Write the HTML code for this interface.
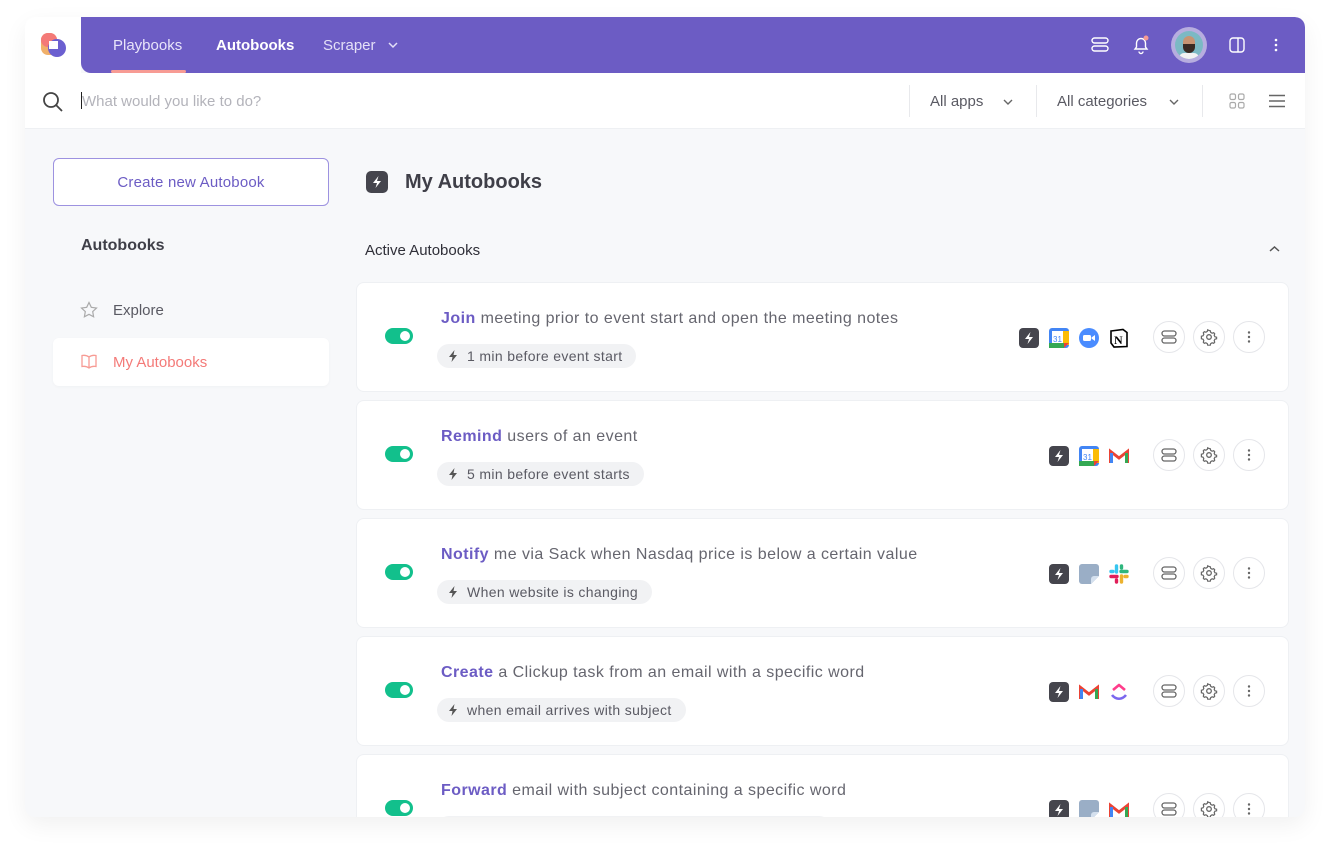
<!DOCTYPE html>
<html><head><meta charset="utf-8"><style>
*{box-sizing:border-box;margin:0;padding:0}
body{width:1330px;height:850px;background:#fff;font-family:"Liberation Sans",sans-serif;position:relative;overflow:hidden;color:#4a4a55}
.abs{position:absolute}
#frame{left:25px;top:17px;width:1280px;height:800px;background:#f7f8fa;border-radius:10px;box-shadow:0 8px 24px rgba(0,0,0,0.06);overflow:hidden}
#hdr{left:56px;top:0;width:1224px;height:56px;background:#6c5cc4;border-radius:0 10px 0 10px}
#logo{left:0;top:0;width:56px;height:56px;background:#fff}
.nav{top:20px;font-size:15px;color:#e4e0f7}
#search{left:0;top:56px;width:1280px;height:56px;background:#fff;border-bottom:1px solid #eef0f3}
.card{left:331px;width:933px;height:110px;background:#fff;border:1px solid #eef0f3;border-radius:8px}
.tog{left:28px;top:45px;width:28px;height:16px;background:#12c08c;border-radius:8px}
.tog:after{content:"";position:absolute;right:3px;top:3px;width:10px;height:10px;border-radius:50%;background:#fff}
.title{left:84px;top:27px;font-size:16px;letter-spacing:0.45px;color:#66666f;white-space:nowrap}
.title b{color:#6c5cc4;font-weight:bold}
.tag{left:80px;top:61px;height:24px;border-radius:12px;background:#f1f2f4;font-size:14px;letter-spacing:0.35px;color:#5a5a63;padding:4px 14px 0 30px;white-space:nowrap}
.tag svg{position:absolute;left:11px;top:6px}
.ic{top:45px;width:20px;height:20px}
.bt{top:38px;width:32px;height:32px;border:1px solid #e5e6ea;border-radius:50%;background:#fff}
.bt svg{position:absolute;left:6px;top:6px}
.zap{background:#45454d;border-radius:4px}
</style></head><body>
<div id="frame" class="abs">
 <div id="logo" class="abs"><svg class="abs" style="left:15px;top:15px" width="26" height="26" viewBox="0 0 26 26"><rect x="1" y="1" width="16" height="22" rx="7" fill="#f0b06a"/><rect x="1" y="1" width="16" height="14" rx="7" fill="#f47a78"/><circle cx="17" cy="16" r="9" fill="#6b5fd0"/><rect x="9" y="9" width="9" height="8" fill="#fff"/></svg></div>
 <div id="hdr" class="abs">
  <div class="abs nav" style="left:32px;color:#e8e4fa">Playbooks</div>
  <div class="abs" style="left:30px;top:53px;width:75px;height:3px;background:#f79b94;border-radius:2px"></div>
  <div class="abs nav" style="left:135px;color:#fff;font-weight:bold">Autobooks</div>
  <div class="abs nav" style="left:242px">Scraper</div>
  <svg class="abs" style="left:307px;top:24px" width="10" height="8"><path d="M1 2l4 4 4-4" fill="none" stroke="#e4e0f7" stroke-width="1.5"/></svg>
  <svg class="abs" style="left:1010px;top:20px" width="18" height="16"><rect x="1" y="1" width="16" height="5" rx="2.5" fill="none" stroke="#fff" stroke-width="1.4"/><rect x="1" y="9" width="16" height="5" rx="2.5" fill="none" stroke="#fff" stroke-width="1.4"/></svg>
  <svg class="abs" style="left:1050px;top:18px" width="20" height="20"><path d="M4 14h12l-1.5-2V8a4.5 4.5 0 0 0-9 0v4z M8 16.5a2 2 0 0 0 4 0" fill="none" stroke="#fff" stroke-width="1.4"/><circle cx="15" cy="3" r="2.5" fill="#f79b94"/></svg>
  <div class="abs" style="left:1090px;top:10px;width:36px;height:36px;border-radius:50%;background:#b7addf"></div>
  <div class="abs" style="left:1094px;top:14px;width:28px;height:28px;border-radius:50%;background:#7cb9c4;overflow:hidden"><div class="abs" style="left:8px;top:5px;width:12px;height:16px;border-radius:6px;background:#c89472"></div><div class="abs" style="left:8px;top:13px;width:12px;height:9px;border-radius:0 0 6px 6px;background:#3a2a22"></div><div class="abs" style="left:4px;top:22px;width:20px;height:10px;border-radius:8px;background:#f2f2f2"></div></div>
  <svg class="abs" style="left:1148px;top:20px" width="16" height="16"><rect x="1" y="1" width="14" height="14" rx="3" fill="none" stroke="#fff" stroke-width="1.4"/><path d="M9 1v14" stroke="#fff" stroke-width="1.4"/></svg>
  <svg class="abs" style="left:1193px;top:20px" width="4" height="16"><circle cx="2" cy="3" r="1.3" fill="#fff"/><circle cx="2" cy="8" r="1.3" fill="#fff"/><circle cx="2" cy="13" r="1.3" fill="#fff"/></svg>
 </div>
 <div id="search" class="abs">
  <svg class="abs" style="left:17px;top:18px" width="22" height="22"><circle cx="9" cy="9" r="7" fill="none" stroke="#444" stroke-width="1.8"/><path d="M14 14l6 6" stroke="#444" stroke-width="1.8"/></svg>
  <div class="abs" style="left:56px;top:19px;width:1px;height:17px;background:#222"></div>
  <div class="abs" style="left:57px;top:20px;font-size:15px;color:#b3b3ba">What would you like to do?</div>
  <div class="abs" style="left:884px;top:12px;width:1px;height:32px;background:#e8e9ec"></div>
  <div class="abs" style="left:905px;top:20px;font-size:15px;color:#5a5a63">All apps</div>
  <svg class="abs" style="left:978px;top:25px" width="10" height="8"><path d="M1 2l4 4 4-4" fill="none" stroke="#666" stroke-width="1.4"/></svg>
  <div class="abs" style="left:1011px;top:12px;width:1px;height:32px;background:#e8e9ec"></div>
  <div class="abs" style="left:1032px;top:20px;font-size:15px;color:#5a5a63">All categories</div>
  <svg class="abs" style="left:1144px;top:25px" width="10" height="8"><path d="M1 2l4 4 4-4" fill="none" stroke="#666" stroke-width="1.4"/></svg>
  <div class="abs" style="left:1177px;top:12px;width:1px;height:32px;background:#e8e9ec"></div>
  <svg class="abs" style="left:1204px;top:20px" width="16" height="16"><g fill="none" stroke="#aaa" stroke-width="1.2"><rect x="1" y="1" width="5.5" height="5.5" rx="1.5"/><rect x="9.5" y="1" width="5.5" height="5.5" rx="1.5"/><rect x="1" y="9.5" width="5.5" height="5.5" rx="1.5"/><rect x="9.5" y="9.5" width="5.5" height="5.5" rx="1.5"/></g></svg>
  <svg class="abs" style="left:1244px;top:21px" width="16" height="14"><path d="M0 1.5h16M0 7h16M0 12.5h16" stroke="#666" stroke-width="1.6"/></svg>
 </div>
 <div class="abs" style="left:28px;top:141px;width:276px;height:48px;border:1px solid #9d92e0;border-radius:6px;background:#fff;text-align:center;font-size:15px;letter-spacing:0.2px;color:#6c5cc4;padding-top:15px">Create new Autobook</div>
 <div class="abs" style="left:56px;top:220px;font-size:16px;font-weight:bold;color:#3f3f48">Autobooks</div>
 <svg class="abs" style="left:55px;top:284px" width="18" height="18"><path d="M9 1.5l2.3 4.8 5.2.7-3.8 3.6.9 5.2L9 13.3l-4.6 2.5.9-5.2L1.5 7l5.2-.7z" fill="none" stroke="#aaa" stroke-width="1.2"/></svg>
 <div class="abs" style="left:88px;top:285px;font-size:15px;color:#5a5a63">Explore</div>
 <div class="abs" style="left:28px;top:321px;width:276px;height:48px;background:#fff;border-radius:6px;box-shadow:0 1px 3px rgba(0,0,0,0.03)"></div>
 <svg class="abs" style="left:55px;top:336px" width="18" height="18"><path d="M9 4c-2-1.5-4.5-2-7-1.5v11c2.5-.5 5 0 7 1.5 2-1.5 4.5-2 7-1.5v-11c-2.5-.5-5 0-7 1.5zM9 4v11" fill="none" stroke="#f79b94" stroke-width="1.3"/></svg>
 <div class="abs" style="left:88px;top:337px;font-size:15px;color:#f47a78">My Autobooks</div>
 <div class="abs zap" style="left:341px;top:154px;width:22px;height:22px;border-radius:5px"><svg class="abs" style="left:5px;top:4px" width="12" height="14"><path d="M7.5 1L2 8h4l-1.5 5L10 6H6z" fill="#fff"/></svg></div>
 <div class="abs" style="left:380px;top:154px;font-size:20px;font-weight:bold;color:#3f3f48">My Autobooks</div>
 <div class="abs" style="left:340px;top:225px;font-size:15px;color:#2f2f38">Active Autobooks</div>
 <svg class="abs" style="left:1244px;top:228px" width="11" height="8"><path d="M1 6l4.5-4 4.5 4" fill="none" stroke="#555" stroke-width="1.5"/></svg>

 <div class="abs card" style="top:265px"><div class="abs tog"></div><div class="abs title"><b>Join</b> meeting prior to event start and open the meeting notes</div><div class="abs tag"><svg width="10" height="12"><path d="M6.5 0L1 7h3.5L3.5 12 9 5H5.5z" fill="#555"/></svg>1 min before event start</div>
  <div class="abs ic zap" style="left:662px"><svg class="abs" style="left:4px;top:3px" width="12" height="14"><path d="M7.5 1L2 8h4l-1.5 5L10 6H6z" fill="#fff"/></svg></div>
  <div class="abs ic" style="left:692px"><svg width="20" height="20"><rect width="20" height="20" rx="3" fill="#4285f4"/><rect x="3" y="3" width="14" height="14" fill="#fff"/><rect x="14" y="3" width="6" height="14" fill="#fbbc04"/><rect x="0" y="15" width="15" height="5" fill="#34a853"/><path d="M15 15h5l-5 5z" fill="#ea4335"/><text x="4" y="14" font-size="8" fill="#4285f4" font-family="Liberation Sans">31</text></svg></div>
  <div class="abs ic" style="left:722px"><svg width="20" height="20"><circle cx="10" cy="10" r="10" fill="#4a8cff"/><rect x="4" y="7" width="8" height="6" rx="1.5" fill="#fff"/><path d="M12.5 9.5l3.5-2.5v6l-3.5-2.5z" fill="#fff"/></svg></div>
  <div class="abs ic" style="left:752px"><svg width="20" height="20"><path d="M2 3l12-1.5 4 3v14l-13 .5-3-4z" fill="#fff" stroke="#000" stroke-width="1.6"/><text x="5" y="16" font-size="12" font-weight="bold" font-family="Liberation Serif">N</text></svg></div>
  <div class="abs bt" style="left:796px"><svg width="18" height="18"><rect x="2" y="3" width="14" height="5" rx="2.5" fill="none" stroke="#666" stroke-width="1.3"/><rect x="2" y="10" width="14" height="5" rx="2.5" fill="none" stroke="#666" stroke-width="1.3"/></svg></div>
  <div class="abs bt" style="left:836px"><svg width="18" height="18"><circle cx="9" cy="9" r="2.3" fill="none" stroke="#666" stroke-width="1.3"/><path d="M9 2.5l1.3.3.4 1.6 1.4.8 1.6-.5 1 1.1-.5 1.6.8 1.4 1.6.4v1.6l-1.6.4-.8 1.4.5 1.6-1 1.1-1.6-.5-1.4.8-.4 1.6H7.7l-.4-1.6-1.4-.8-1.6.5-1-1.1.5-1.6-.8-1.4-1.6-.4V8.2l1.6-.4.8-1.4-.5-1.6 1-1.1 1.6.5 1.4-.8.4-1.6z" fill="none" stroke="#666" stroke-width="1.2"/></svg></div>
  <div class="abs bt" style="left:876px"><svg width="18" height="18"><circle cx="9" cy="4.5" r="1.2" fill="#666"/><circle cx="9" cy="9" r="1.2" fill="#666"/><circle cx="9" cy="13.5" r="1.2" fill="#666"/></svg></div>
 </div>

 <div class="abs card" style="top:383px"><div class="abs tog"></div><div class="abs title"><b>Remind</b> users of an event</div><div class="abs tag"><svg width="10" height="12"><path d="M6.5 0L1 7h3.5L3.5 12 9 5H5.5z" fill="#555"/></svg>5 min before event starts</div>
  <div class="abs ic zap" style="left:692px"><svg class="abs" style="left:4px;top:3px" width="12" height="14"><path d="M7.5 1L2 8h4l-1.5 5L10 6H6z" fill="#fff"/></svg></div>
  <div class="abs ic" style="left:722px"><svg width="20" height="20"><rect width="20" height="20" rx="3" fill="#4285f4"/><rect x="3" y="3" width="14" height="14" fill="#fff"/><rect x="14" y="3" width="6" height="14" fill="#fbbc04"/><rect x="0" y="15" width="15" height="5" fill="#34a853"/><path d="M15 15h5l-5 5z" fill="#ea4335"/><text x="4" y="14" font-size="8" fill="#4285f4" font-family="Liberation Sans">31</text></svg></div>
  <div class="abs ic" style="left:752px"><svg width="20" height="20"><path d="M1 17V5l9 7 9-7v12" fill="none" stroke="#ea4335" stroke-width="3"/><path d="M2.5 17V7" stroke="#4285f4" stroke-width="3"/><path d="M17.5 17V7" stroke="#34a853" stroke-width="3"/></svg></div>
  <div class="abs bt" style="left:796px"><svg width="18" height="18"><rect x="2" y="3" width="14" height="5" rx="2.5" fill="none" stroke="#666" stroke-width="1.3"/><rect x="2" y="10" width="14" height="5" rx="2.5" fill="none" stroke="#666" stroke-width="1.3"/></svg></div>
  <div class="abs bt" style="left:836px"><svg width="18" height="18"><circle cx="9" cy="9" r="2.3" fill="none" stroke="#666" stroke-width="1.3"/><path d="M9 2.5l1.3.3.4 1.6 1.4.8 1.6-.5 1 1.1-.5 1.6.8 1.4 1.6.4v1.6l-1.6.4-.8 1.4.5 1.6-1 1.1-1.6-.5-1.4.8-.4 1.6H7.7l-.4-1.6-1.4-.8-1.6.5-1-1.1.5-1.6-.8-1.4-1.6-.4V8.2l1.6-.4.8-1.4-.5-1.6 1-1.1 1.6.5 1.4-.8.4-1.6z" fill="none" stroke="#666" stroke-width="1.2"/></svg></div>
  <div class="abs bt" style="left:876px"><svg width="18" height="18"><circle cx="9" cy="4.5" r="1.2" fill="#666"/><circle cx="9" cy="9" r="1.2" fill="#666"/><circle cx="9" cy="13.5" r="1.2" fill="#666"/></svg></div>
 </div>

 <div class="abs card" style="top:501px"><div class="abs tog"></div><div class="abs title"><b>Notify</b> me via Sack when Nasdaq price is below a certain value</div><div class="abs tag"><svg width="10" height="12"><path d="M6.5 0L1 7h3.5L3.5 12 9 5H5.5z" fill="#555"/></svg>When website is changing</div>
  <div class="abs ic zap" style="left:692px"><svg class="abs" style="left:4px;top:3px" width="12" height="14"><path d="M7.5 1L2 8h4l-1.5 5L10 6H6z" fill="#fff"/></svg></div>
  <div class="abs ic" style="left:722px"><svg width="20" height="20"><path d="M3 0h14a3 3 0 0 1 3 3v9l-8 8H3a3 3 0 0 1-3-3V3a3 3 0 0 1 3-3z" fill="#9aaec6"/><path d="M20 12l-8 8v-5a3 3 0 0 1 3-3z" fill="#d4e0ee"/></svg></div>
  <div class="abs ic" style="left:752px"><svg width="20" height="20"><g stroke-linecap="round" stroke-width="3.4"><path d="M7.5 2v6" stroke="#36c5f0"/><path d="M2 12.5h6" stroke="#e01e5a"/><path d="M12.5 12v6" stroke="#ecb22e" /><path d="M12 7.5h6" stroke="#2eb67d"/><path d="M2 7.5h2" stroke="#36c5f0"/><path d="M7.5 16v2" stroke="#e01e5a"/><path d="M16 12.5h2" stroke="#ecb22e"/><path d="M12.5 2v2" stroke="#2eb67d"/></g></svg></div>
  <div class="abs bt" style="left:796px"><svg width="18" height="18"><rect x="2" y="3" width="14" height="5" rx="2.5" fill="none" stroke="#666" stroke-width="1.3"/><rect x="2" y="10" width="14" height="5" rx="2.5" fill="none" stroke="#666" stroke-width="1.3"/></svg></div>
  <div class="abs bt" style="left:836px"><svg width="18" height="18"><circle cx="9" cy="9" r="2.3" fill="none" stroke="#666" stroke-width="1.3"/><path d="M9 2.5l1.3.3.4 1.6 1.4.8 1.6-.5 1 1.1-.5 1.6.8 1.4 1.6.4v1.6l-1.6.4-.8 1.4.5 1.6-1 1.1-1.6-.5-1.4.8-.4 1.6H7.7l-.4-1.6-1.4-.8-1.6.5-1-1.1.5-1.6-.8-1.4-1.6-.4V8.2l1.6-.4.8-1.4-.5-1.6 1-1.1 1.6.5 1.4-.8.4-1.6z" fill="none" stroke="#666" stroke-width="1.2"/></svg></div>
  <div class="abs bt" style="left:876px"><svg width="18" height="18"><circle cx="9" cy="4.5" r="1.2" fill="#666"/><circle cx="9" cy="9" r="1.2" fill="#666"/><circle cx="9" cy="13.5" r="1.2" fill="#666"/></svg></div>
 </div>

 <div class="abs card" style="top:619px"><div class="abs tog"></div><div class="abs title"><b>Create</b> a Clickup task from an email with a specific word</div><div class="abs tag"><svg width="10" height="12"><path d="M6.5 0L1 7h3.5L3.5 12 9 5H5.5z" fill="#555"/></svg>when email arrives with subject</div>
  <div class="abs ic zap" style="left:692px"><svg class="abs" style="left:4px;top:3px" width="12" height="14"><path d="M7.5 1L2 8h4l-1.5 5L10 6H6z" fill="#fff"/></svg></div>
  <div class="abs ic" style="left:722px"><svg width="20" height="20"><path d="M1 17V5l9 7 9-7v12" fill="none" stroke="#ea4335" stroke-width="3"/><path d="M2.5 17V7" stroke="#4285f4" stroke-width="3"/><path d="M17.5 17V7" stroke="#34a853" stroke-width="3"/></svg></div>
  <div class="abs ic" style="left:752px"><svg width="20" height="20"><path d="M4 8l6-5 6 5" fill="none" stroke="#ff3d8b" stroke-width="2.6" stroke-linejoin="round"/><path d="M3 13c4 5 10 5 14 0" fill="none" stroke="#7b68ee" stroke-width="2.6"/></svg></div>
  <div class="abs bt" style="left:796px"><svg width="18" height="18"><rect x="2" y="3" width="14" height="5" rx="2.5" fill="none" stroke="#666" stroke-width="1.3"/><rect x="2" y="10" width="14" height="5" rx="2.5" fill="none" stroke="#666" stroke-width="1.3"/></svg></div>
  <div class="abs bt" style="left:836px"><svg width="18" height="18"><circle cx="9" cy="9" r="2.3" fill="none" stroke="#666" stroke-width="1.3"/><path d="M9 2.5l1.3.3.4 1.6 1.4.8 1.6-.5 1 1.1-.5 1.6.8 1.4 1.6.4v1.6l-1.6.4-.8 1.4.5 1.6-1 1.1-1.6-.5-1.4.8-.4 1.6H7.7l-.4-1.6-1.4-.8-1.6.5-1-1.1.5-1.6-.8-1.4-1.6-.4V8.2l1.6-.4.8-1.4-.5-1.6 1-1.1 1.6.5 1.4-.8.4-1.6z" fill="none" stroke="#666" stroke-width="1.2"/></svg></div>
  <div class="abs bt" style="left:876px"><svg width="18" height="18"><circle cx="9" cy="4.5" r="1.2" fill="#666"/><circle cx="9" cy="9" r="1.2" fill="#666"/><circle cx="9" cy="13.5" r="1.2" fill="#666"/></svg></div>
 </div>

 <div class="abs card" style="top:737px"><div class="abs tog"></div><div class="abs title"><b>Forward</b> email with subject containing a specific word</div><div class="abs tag" style="width:394px">&nbsp;</div>
  <div class="abs ic zap" style="left:692px"><svg class="abs" style="left:4px;top:3px" width="12" height="14"><path d="M7.5 1L2 8h4l-1.5 5L10 6H6z" fill="#fff"/></svg></div>
  <div class="abs ic" style="left:722px"><svg width="20" height="20"><path d="M3 0h14a3 3 0 0 1 3 3v9l-8 8H3a3 3 0 0 1-3-3V3a3 3 0 0 1 3-3z" fill="#9aaec6"/><path d="M20 12l-8 8v-5a3 3 0 0 1 3-3z" fill="#d4e0ee"/></svg></div>
  <div class="abs ic" style="left:752px"><svg width="20" height="20"><path d="M1 17V5l9 7 9-7v12" fill="none" stroke="#ea4335" stroke-width="3"/><path d="M2.5 17V7" stroke="#4285f4" stroke-width="3"/><path d="M17.5 17V7" stroke="#34a853" stroke-width="3"/></svg></div>
  <div class="abs bt" style="left:796px"><svg width="18" height="18"><rect x="2" y="3" width="14" height="5" rx="2.5" fill="none" stroke="#666" stroke-width="1.3"/><rect x="2" y="10" width="14" height="5" rx="2.5" fill="none" stroke="#666" stroke-width="1.3"/></svg></div>
  <div class="abs bt" style="left:836px"><svg width="18" height="18"><circle cx="9" cy="9" r="2.3" fill="none" stroke="#666" stroke-width="1.3"/><path d="M9 2.5l1.3.3.4 1.6 1.4.8 1.6-.5 1 1.1-.5 1.6.8 1.4 1.6.4v1.6l-1.6.4-.8 1.4.5 1.6-1 1.1-1.6-.5-1.4.8-.4 1.6H7.7l-.4-1.6-1.4-.8-1.6.5-1-1.1.5-1.6-.8-1.4-1.6-.4V8.2l1.6-.4.8-1.4-.5-1.6 1-1.1 1.6.5 1.4-.8.4-1.6z" fill="none" stroke="#666" stroke-width="1.2"/></svg></div>
  <div class="abs bt" style="left:876px"><svg width="18" height="18"><circle cx="9" cy="4.5" r="1.2" fill="#666"/><circle cx="9" cy="9" r="1.2" fill="#666"/><circle cx="9" cy="13.5" r="1.2" fill="#666"/></svg></div>
 </div>
</div>
</body></html>
